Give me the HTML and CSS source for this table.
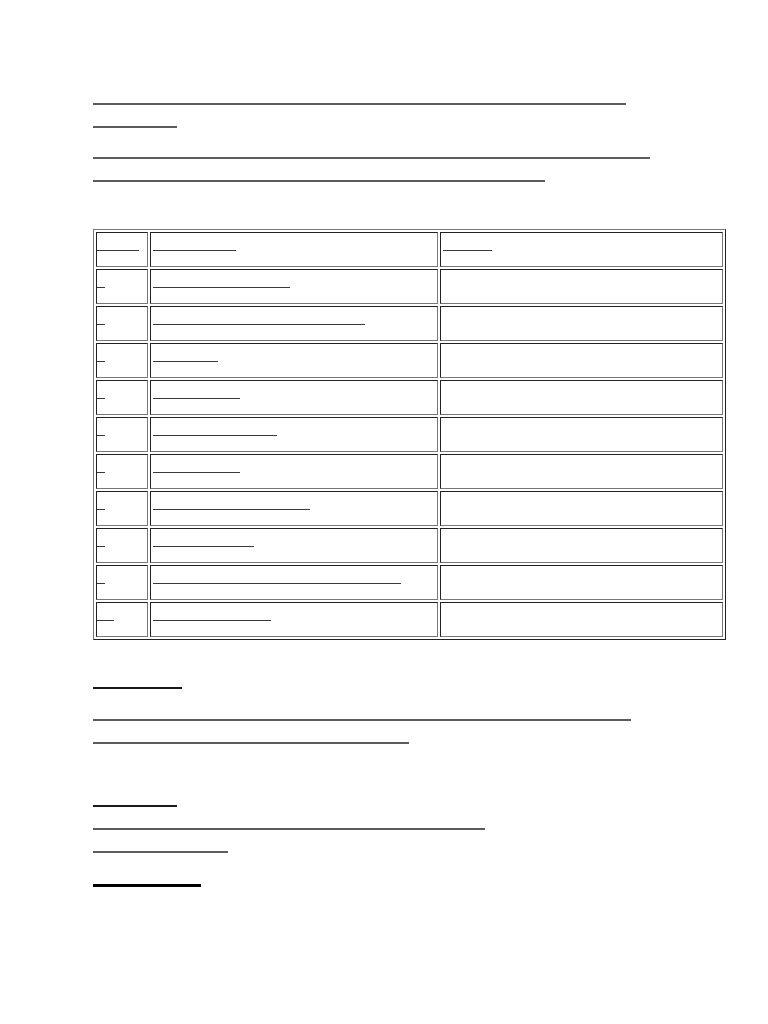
FILE: index.html
```html
<!DOCTYPE html>
<html>
<head>
<meta charset="utf-8">
<title>Document</title>
<link rel="stylesheet" href="styles.css">
</head>
<body>
<div class="page">
  <div class="para p-first">
    <div class="ln"><span class="ul w533">This document lists the members of the working group and their roles</span></div>
    <div class="ln"><span class="ul w84">for this year.</span></div>
  </div>
  <div class="para p-second">
    <div class="ln"><span class="ul w557">Please review the table below and contact the coordinator if any details</span></div>
    <div class="ln"><span class="ul w452">need to be corrected before the next meeting of the committee.</span></div>
  </div>

  <table class="grid">
    <colgroup><col class="c1"><col class="c2"><col class="c3"></colgroup>
    <tr><td><span class="cu w42">No.</span></td><td><span class="cu w83">Name</span></td><td><span class="cu w49">Notes</span></td></tr>
    <tr><td><span class="cu w8">1</span></td><td><span class="cu w137">Anna Bergstrom</span></td><td></td></tr>
    <tr><td><span class="cu w8">2</span></td><td><span class="cu w212">Christopher Montgomery</span></td><td></td></tr>
    <tr><td><span class="cu w8">3</span></td><td><span class="cu w65">Li Wang</span></td><td></td></tr>
    <tr><td><span class="cu w8">4</span></td><td><span class="cu w87">Paul Meyer</span></td><td></td></tr>
    <tr><td><span class="cu w8">5</span></td><td><span class="cu w124">Sofia Martinez</span></td><td></td></tr>
    <tr><td><span class="cu w8">6</span></td><td><span class="cu w87">Omar Said</span></td><td></td></tr>
    <tr><td><span class="cu w8">7</span></td><td><span class="cu w157">Katarina Novakova</span></td><td></td></tr>
    <tr><td><span class="cu w8">8</span></td><td><span class="cu w101">James Brown</span></td><td></td></tr>
    <tr><td><span class="cu w8">9</span></td><td><span class="cu w248">Elisabeth van der Westhuizen</span></td><td></td></tr>
    <tr><td><span class="cu w16">10</span></td><td><span class="cu w118">Tomas Lindqvist</span></td><td></td></tr>
  </table>

  <div class="para p-third">
    <div class="ln"><span class="ul w89 dark">Next steps</span></div>
  </div>
  <div class="para p-fourth">
    <div class="ln"><span class="ul w538">Each member should confirm their role and update their contact details</span></div>
    <div class="ln"><span class="ul w316">in the shared folder by the end of the month.</span></div>
  </div>
  <div class="para p-fifth">
    <div class="ln"><span class="ul w84 dark">Coordinator</span></div>
    <div class="ln"><span class="ul w392">Working Group Office, Room 214, Main Building</span></div>
    <div class="ln"><span class="ul w135">Back to top</span></div>
  </div>
  <div class="para p-last">
    <div class="ln"><span class="ul w108 bold">Last updated</span></div>
  </div>
</div>
</body>
</html>
```

FILE: styles.css
```css
html, body {
  margin: 0;
  padding: 0;
  background: #fff;
}

body {
  font-family: "Liberation Serif", "Times New Roman", serif;
  font-size: 16px;
  color: #fff;
}

.page {
  padding: 84px 0 40px 93px;
  width: 632px;
}

.para {
  display: flex;
  flex-direction: column;
}

.p-second { margin-top: 8px; }
.p-third { margin-top: 28px; }
.p-fourth { margin-top: 9px; }
.p-fifth { margin-top: 40px; }
.p-last { margin-top: 11px; }

.ln {
  height: 23px;
  line-height: 19px;
}

.ul {
  display: inline-block;
  height: 19px;
  overflow: hidden;
  white-space: nowrap;
  color: #fff;
  border-bottom: 2px solid #5c5c5c;
  box-sizing: content-box;
}

.ul.dark { border-bottom-color: #1a1a1a; }
.ul.bold {
  font-weight: bold;
  height: 18px;
  border-bottom: 3px solid #000;
}

/* table */
.grid {
  margin-top: 45px;
  width: 633px;
  border: 1px solid;
  border-color: #777 #222 #222 #777;
  border-spacing: 2px;
  table-layout: fixed;
}

.grid .c1 { width: 52px; }
.grid .c2 { width: 288px; }
.grid .c3 { width: 283px; }

.grid td {
  height: 33px;
  padding: 0 2px;
  vertical-align: top;
  border: 1px solid;
  border-color: #222 #777 #777 #222;
  box-sizing: content-box;
  line-height: 16px;
}

.grid td:first-child { padding-left: 0; }

.cu {
  display: inline-block;
  margin-top: 1px;
  height: 16px;
  overflow: hidden;
  white-space: nowrap;
  color: #fff;
  border-bottom: 1px solid #3a3a3a;
}

.w8 { width: 8px; }
.w16 { width: 17px; }
.w42 { width: 42px; }
.w49 { width: 49px; }
.w65 { width: 65px; }
.w83 { width: 83px; }
.w84 { width: 84px; }
.w87 { width: 87px; }
.w89 { width: 89px; }
.w101 { width: 101px; }
.w108 { width: 108px; }
.w118 { width: 118px; }
.w124 { width: 124px; }
.w135 { width: 135px; }
.w137 { width: 137px; }
.w157 { width: 157px; }
.w212 { width: 212px; }
.w248 { width: 248px; }
.w316 { width: 316px; }
.w392 { width: 392px; }
.w452 { width: 452px; }
.w533 { width: 533px; }
.w538 { width: 538px; }
.w557 { width: 557px; }
```
